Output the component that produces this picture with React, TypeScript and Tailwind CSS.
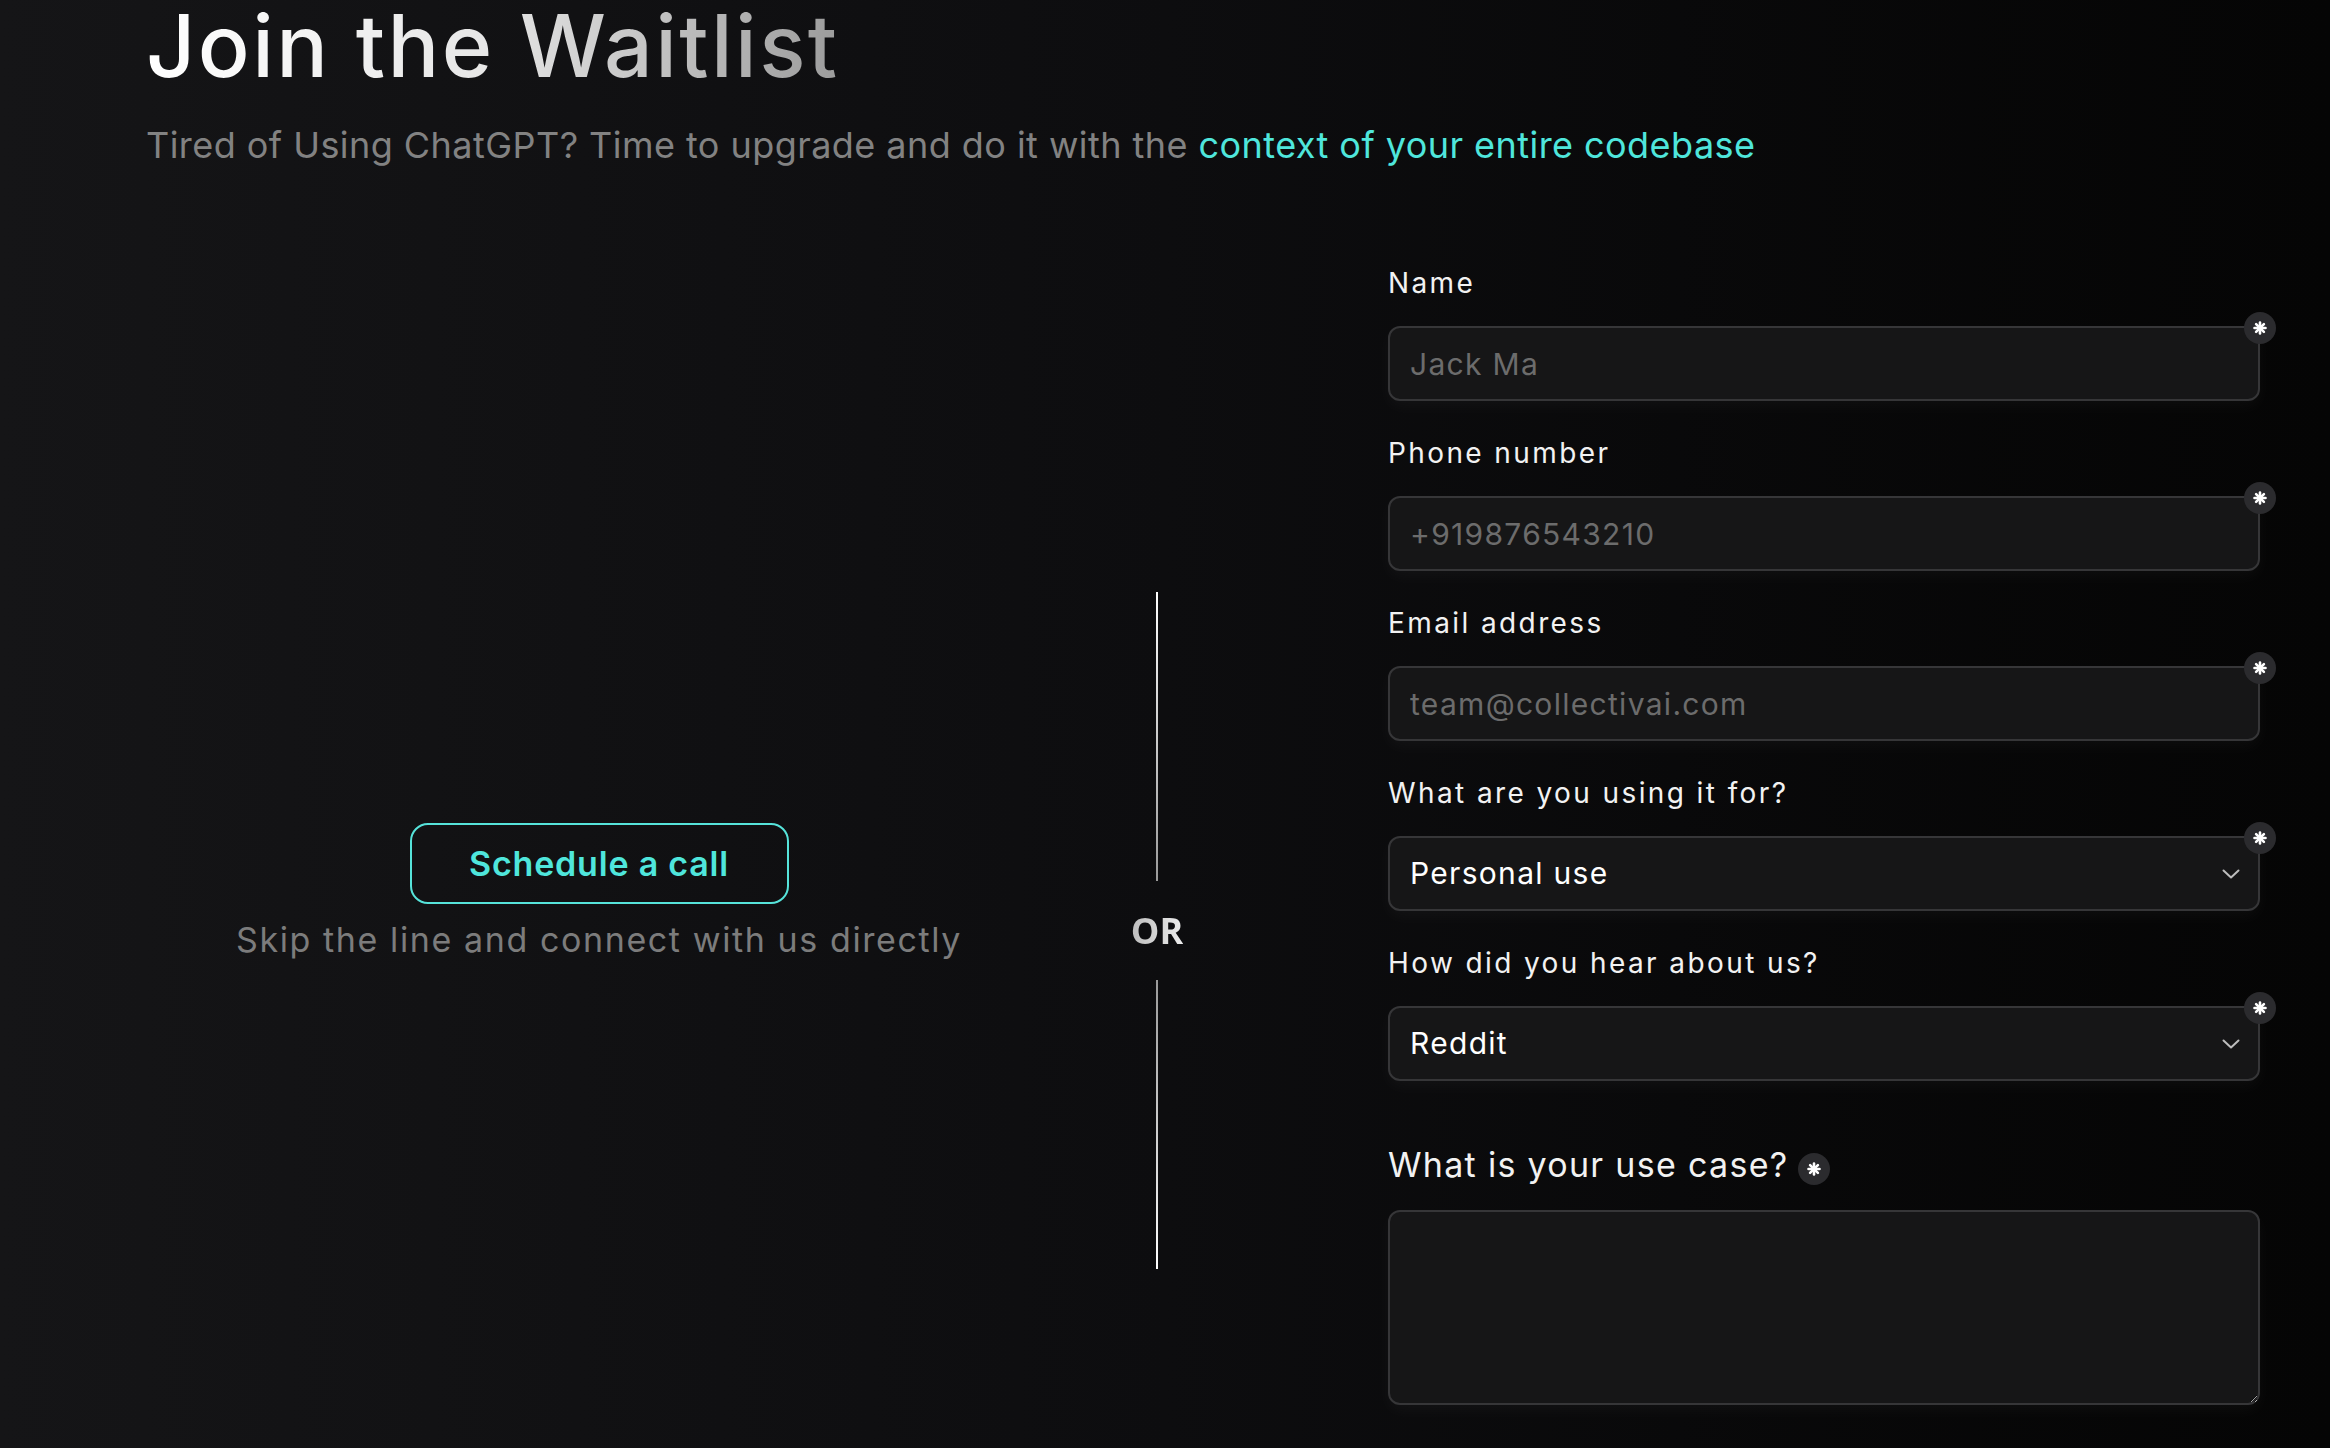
import React from "react";

const inter = { fontFamily: "Inter, 'Noto Sans', sans-serif" };

function Asterisk({ className }: { className?: string }) {
  return (
    <span
      className={
        "flex h-8 w-8 items-center justify-center rounded-full bg-[#2b2b2e] " + (className ?? "")
      }
    >
      <svg width="14" height="14" viewBox="0 0 14 14" fill="none">
        <g stroke="#ffffff" strokeWidth="2.6" strokeLinecap="round">
          <line x1="7" y1="1.5" x2="7" y2="12.5" />
          <line x1="1.5" y1="7" x2="12.5" y2="7" />
          <line x1="3.1" y1="3.1" x2="10.9" y2="10.9" />
          <line x1="10.9" y1="3.1" x2="3.1" y2="10.9" />
        </g>
      </svg>
    </span>
  );
}

function Chevron() {
  return (
    <svg width="18" height="10" viewBox="0 0 18 10" fill="none">
      <path d="M1.5 1.5 9 8.5 16.5 1.5" stroke="#bdbdbd" strokeWidth="2" strokeLinecap="round" strokeLinejoin="round" />
    </svg>
  );
}

type FieldProps = {
  label: string;
  children: React.ReactNode;
};

function Field({ label, children }: FieldProps) {
  return (
    <div className="mb-[36px]">
      <label className="mb-[27px] block text-[28px] leading-[32px] tracking-[2.4px] text-[#f2f2f2]">
        {label}
      </label>
      <div className="relative">
        {children}
        <Asterisk className="absolute -right-4 -top-[14px]" />
      </div>
    </div>
  );
}

const boxCls =
  "h-[75px] w-full rounded-[12px] border-2 border-[#363638] bg-[#161617] px-[20px] text-[30px] tracking-[1.3px] outline-none shadow-[0_6px_16px_rgba(255,255,255,0.035)]";

export default function App() {
  return (
    <div
      className="min-h-screen w-full overflow-hidden bg-linear-to-r from-[#151517] via-[#0d0d0f] to-[#050505] [color-scheme:dark]"
      style={inter}
    >
      <div className="pl-[146px]">
        <h1 className="mt-[3px] inline-block bg-linear-to-r from-white via-[#e6e6e6] to-[#9c9c9c] bg-clip-text text-[86px] font-medium leading-[86px] tracking-[2.4px] text-transparent">
          Join the Waitlist
        </h1>
        <p className="mt-[34px] text-[36px] leading-[44px] tracking-[0.45px] text-[#828282]">
          Tired of Using ChatGPT? Time to upgrade and do it with the{" "}
          <span className="text-[#4fe6dc]">context of your entire codebase</span>
        </p>
      </div>

      <div className="mt-[58px] flex items-start pl-[146px]">
        {/* left column */}
        <div className="flex w-[906px] flex-col items-center pt-[598px]">
          <button className="flex h-[81px] w-[379px] items-center justify-center rounded-[18px] border-2 border-[#56e3da] text-[34px] font-semibold tracking-[0.8px] text-[#4fe6dc]">
            Schedule a call
          </button>
          <p className="mt-[14px] text-[34px] leading-[44px] tracking-[1.6px] text-[#7c7c7c]">
            Skip the line and connect with us directly
          </p>
        </div>

        {/* divider */}
        <div className="flex w-[210px] flex-col items-center pt-[367px]">
          <div className="h-[289px] w-[2px] bg-linear-to-b from-white to-[#9a9a9a]" />
          <div
            className="flex h-[99px] items-center bg-linear-to-r from-[#bdbdbd] to-[#ececec] bg-clip-text text-[36px] font-bold text-transparent"
            style={{ fontFamily: "'Open Sans', sans-serif" }}
          >
            OR
          </div>
          <div className="h-[289px] w-[2px] bg-linear-to-b from-[#9a9a9a] to-white" />
        </div>

        {/* form */}
        <form className="ml-[126px] w-[872px] pt-[42px]">
          <Field label="Name">
            <input className={boxCls + " text-white placeholder:text-[#6c6c6c]"} placeholder="Jack Ma" />
          </Field>
          <Field label="Phone number">
            <input className={boxCls + " text-white placeholder:text-[#6c6c6c]"} placeholder="+919876543210" />
          </Field>
          <Field label="Email address">
            <input className={boxCls + " text-white placeholder:text-[#6c6c6c]"} placeholder="team@collectivai.com" />
          </Field>
          <Field label="What are you using it for?">
            <select className={boxCls + " appearance-none text-white"} defaultValue="Personal use">
              <option>Personal use</option>
              <option>Work</option>
            </select>
            <span className="pointer-events-none absolute right-[20px] top-1/2 -translate-y-1/2">
              <Chevron />
            </span>
          </Field>
          <Field label="How did you hear about us?">
            <select className={boxCls + " appearance-none text-white"} defaultValue="Reddit">
              <option>Reddit</option>
              <option>Twitter</option>
            </select>
            <span className="pointer-events-none absolute right-[20px] top-1/2 -translate-y-1/2">
              <Chevron />
            </span>
          </Field>

          <div className="mt-[62px]">
            <label className="mb-[23px] flex items-center gap-[10px] text-[34px] leading-[44px] tracking-[1.3px] text-[#f2f2f2]">
              What is your use case?
              <Asterisk className="mt-[8px]" />
            </label>
            <textarea className="block h-[195px] w-full rounded-[12px] border-2 border-[#363638] bg-[#161617] px-[20px] py-[14px] text-[28px] text-white outline-none shadow-[0_6px_16px_rgba(255,255,255,0.035)]" />
          </div>
        </form>
      </div>
    </div>
  );
}
